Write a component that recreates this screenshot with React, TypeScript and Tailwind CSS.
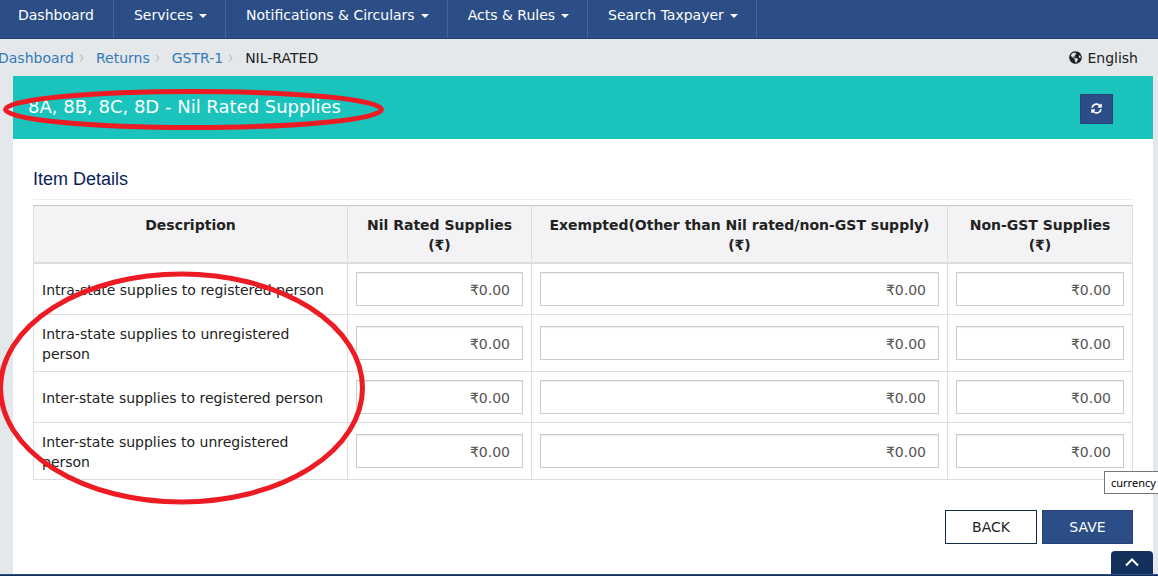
import { FaGlobeAmericas, FaSyncAlt } from "react-icons/fa";

const NAV = [
  { label: "Dashboard", menu: false },
  { label: "Services", menu: true },
  { label: "Notifications & Circulars", menu: true },
  { label: "Acts & Rules", menu: true },
  { label: "Search Taxpayer", menu: true },
];

const CRUMBS = ["Dashboard", "Returns", "GSTR-1"];

const COLUMNS = [
  { title: "Nil Rated Supplies", width: "w-[184px]" },
  { title: "Exempted(Other than Nil rated/non-GST supply)", width: "" },
  { title: "Non-GST Supplies", width: "w-[185px]" },
];

const ROWS = [
  "Intra-state supplies to registered person",
  "Intra-state supplies to unregistered person",
  "Inter-state supplies to registered person",
  "Inter-state supplies to unregistered person",
];

function NavBar() {
  return (
    <nav className="flex h-[39px] border-b border-[#223f70] bg-[#2c4e86] text-white">
      {NAV.map(({ label, menu }, i) => (
        <a
          key={label}
          href="#"
          className={`flex items-start border-r border-[#4b658f] pt-[5px] whitespace-nowrap ${
            i === 0 ? "pr-[19px] pl-[18px]" : "pr-[18px] pl-5"
          }`}
        >
          {label}
          {menu && (
            <span
              className="mt-[9px] ml-1.5 border-x-4 border-t-4 border-x-transparent border-t-white"
              aria-hidden
            />
          )}
        </a>
      ))}
    </nav>
  );
}

function Breadcrumbs() {
  return (
    <div className="flex h-[37px] items-center justify-between pr-5">
      <ol className="-ml-0.5 flex items-center">
        {CRUMBS.map((label) => (
          <li key={label} className="flex items-center">
            <a href="#" className="text-[#337ab7]">
              {label}
            </a>
            <svg
              viewBox="0 0 5 8"
              className="mr-3 ml-[5px] h-2 w-[5px] text-[#c3c6c9]"
              fill="none"
              stroke="currentColor"
              strokeWidth="1.3"
              aria-hidden
            >
              <path d="M1 0.5 4 4 1 7.5" />
            </svg>
          </li>
        ))}
        <li aria-current="page">NIL-RATED</li>
      </ol>
      <button type="button" className="flex items-center gap-[5px]">
        <FaGlobeAmericas className="size-[13px]" aria-hidden />
        English
      </button>
    </div>
  );
}

function SuppliesTable() {
  return (
    <table className="mt-[5px] w-full table-fixed border-collapse border border-[#dddddd] border-t-[#c3c3cd]">
      <thead className="bg-[#f3f3f5]">
        <tr>
          <th className="w-[314px] border-r border-b-2 border-[#dddddd] px-2 pt-[9px] pb-[7px] align-top">
            Description
          </th>
          {COLUMNS.map(({ title, width }) => (
            <th
              key={title}
              className={`border-r border-b-2 border-[#dddddd] px-2 pt-[9px] pb-[7px] align-top ${width}`}
            >
              {title}
              <br />
              (₹)
            </th>
          ))}
        </tr>
      </thead>
      <tbody>
        {ROWS.map((row) => (
          <tr key={row}>
            <th
              scope="row"
              className="border border-[#dddddd] px-2 pt-[9px] pb-[7px] text-left font-normal"
            >
              {row}
            </th>
            {COLUMNS.map(({ title }) => (
              <td key={title} className="border border-[#dddddd] p-2">
                <input
                  type="text"
                  aria-label={`${title}, ${row}`}
                  defaultValue="₹0.00"
                  className="block h-[34px] w-full border border-[#cccccc] px-3 pt-0.5 text-right text-[#555555] shadow-[inset_0_1px_1px_rgba(0,0,0,0.075)]"
                />
              </td>
            ))}
          </tr>
        ))}
      </tbody>
    </table>
  );
}

/** Hand-drawn style rings that call out the heading and the row labels. */
function Highlights() {
  return (
    <svg
      className="pointer-events-none absolute top-0 left-0 h-[576px] w-[400px]"
      viewBox="0 0 400 576"
      fill="none"
      stroke="#ed1c24"
      strokeWidth="5"
      aria-hidden
    >
      <ellipse cx="193.5" cy="109.5" rx="188" ry="18" />
      <ellipse cx="181.5" cy="388" rx="181" ry="114" />
    </svg>
  );
}

export default function App() {
  return (
    <div className="relative flex min-h-screen flex-col overflow-hidden bg-[#e4e8eb] font-[Verdana,'DejaVu_Sans',sans-serif] text-[14px] leading-5 text-[#222222]">
      <NavBar />
      <Breadcrumbs />

      <main className="relative mr-[5px] ml-[13px] flex-1 bg-white">
        <header className="flex h-[63px] items-center justify-between bg-[#1ac4bd] pr-10 pb-0.5 pl-[15px] text-white">
          <h1 className="text-[18px]">8A, 8B, 8C, 8D - Nil Rated Supplies</h1>
          <button
            type="button"
            aria-label="Refresh"
            className="mt-1 flex h-[30px] w-[33px] items-center justify-center border border-[#274374] bg-[#2c4e86]"
          >
            <FaSyncAlt className="size-[11px]" aria-hidden />
          </button>
        </header>

        <section className="px-5 pt-[30px]">
          <h2 className="border-b border-[#eeeeee] pb-[10px] font-['Liberation_Sans',Arial,sans-serif] text-[18px] text-[#0b1e59]">
            Item Details
          </h2>
          <SuppliesTable />
          <div className="mt-[30px] flex justify-end gap-[5px]">
            <button
              type="button"
              className="h-[34px] w-[92px] border border-[#14294a] bg-white"
            >
              BACK
            </button>
            <button
              type="button"
              className="h-[34px] w-[91px] border border-[#274374] bg-[#2c4e86] text-white"
            >
              SAVE
            </button>
          </div>
        </section>

        <button
          type="button"
          aria-label="Back to top"
          className="absolute right-0 bottom-0 flex h-[23px] w-[42px] items-center justify-center rounded-t bg-[#14315d] text-white"
        >
          <svg
            viewBox="0 0 14 9"
            className="h-[9px] w-[14px]"
            fill="none"
            stroke="currentColor"
            strokeWidth="2"
            aria-hidden
          >
            <path d="M1 7.5 7 1.5 13 7.5" />
          </svg>
        </button>
      </main>

      <footer className="h-0.5 border-t border-[#2c4e86] bg-[#14315d]" />

      <div
        role="tooltip"
        className="absolute top-[471px] left-[1104px] h-[23px] border border-[#767676] bg-white px-1.5 font-['Noto_Sans',sans-serif] text-[11px] leading-[21px] whitespace-nowrap text-black"
      >
        currency
      </div>
      <Highlights />
    </div>
  );
}
